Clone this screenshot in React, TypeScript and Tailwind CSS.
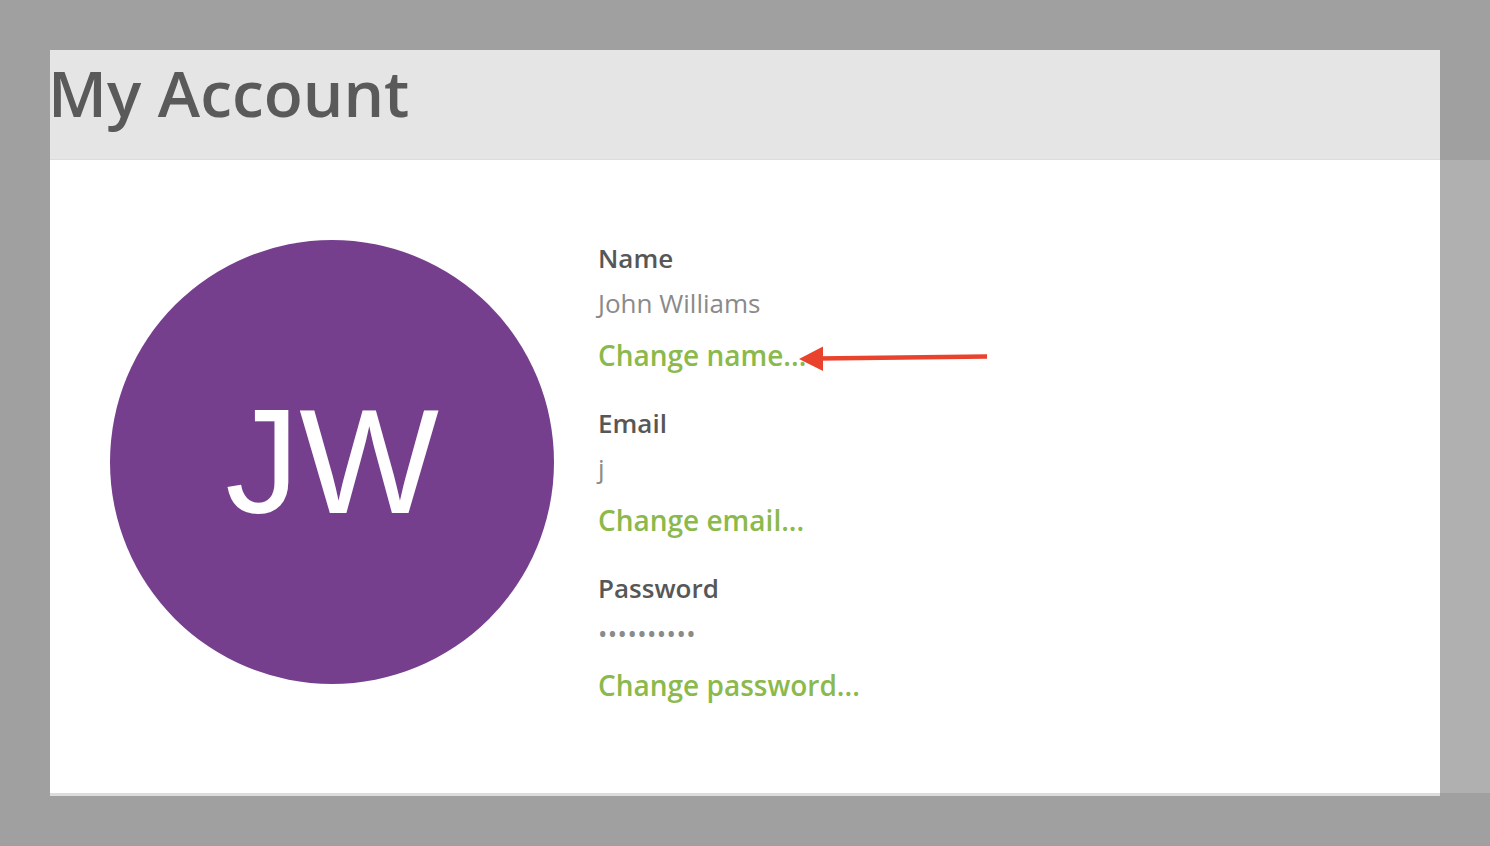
import React from "react";

const font = { fontFamily: '"Open Sans", "Liberation Sans", sans-serif' };

function Field({ label, value, link, valueClass }: { label: string; value: string; link: string; valueClass?: string }) {
  return (
    <div className="flex flex-col pb-[20px]">
      <div className="h-[40px] text-[26px] leading-[40px] font-semibold text-[#575757]">{label}</div>
      <div className={`h-[50px] leading-[50px] text-[#8a8a8a] ${valueClass ?? "text-[26px]"}`}>{value}</div>
      <div className="h-[55px] text-[28px] leading-[55px] font-semibold text-[#8bb94b] whitespace-nowrap">{link}</div>
    </div>
  );
}

export default function App() {
  return (
    <div className="w-full h-[846px] bg-[#a0a0a0] pt-[50px] pl-[50px] flex overflow-hidden" style={font}>
      <div className="w-[1390px] flex flex-col">
        <div className="h-[110px] bg-[#e5e5e5] border-b border-[#dcdcdc] pt-[11px]">
          <div className="-ml-[2px] text-[64px] leading-none font-semibold text-[#5a5a5a]">My Account</div>
        </div>
        <div className="relative h-[636px] bg-white border-b-[3px] border-[#dcdcdc] flex items-start">
          <div className="ml-[60px] mt-[80px] w-[444px] h-[444px] rounded-full bg-[#763f8e] flex items-center justify-center shrink-0">
            <span className="text-white text-[148px] leading-none" style={{ fontFamily: '"Liberation Sans", Arial, sans-serif' }}>JW</span>
          </div>
          <div className="ml-[44px] pt-[78px] flex flex-col">
            <Field label="Name" value="John Williams" link="Change name..." />
            <Field label="Email" value="j" link="Change email..." />
            <Field label="Password" value="••••••••••" link="Change password..." valueClass="text-[25px] tracking-[0.4px]" />
          </div>
          <svg className="absolute left-0 top-0 pointer-events-none" width="1390" height="633" viewBox="0 0 1390 633">
            <g transform="translate(-50,-160)">
              <line x1="818" y1="358.6" x2="987" y2="356.4" stroke="#e9432d" strokeWidth="4.5" />
              <polygon points="799,359 823,346.5 823,371" fill="#e9432d" />
            </g>
          </svg>
        </div>
      </div>
      <div className="w-[50px] mt-[110px] h-[633px] bg-[#b0b0b0]" />
    </div>
  );
}
